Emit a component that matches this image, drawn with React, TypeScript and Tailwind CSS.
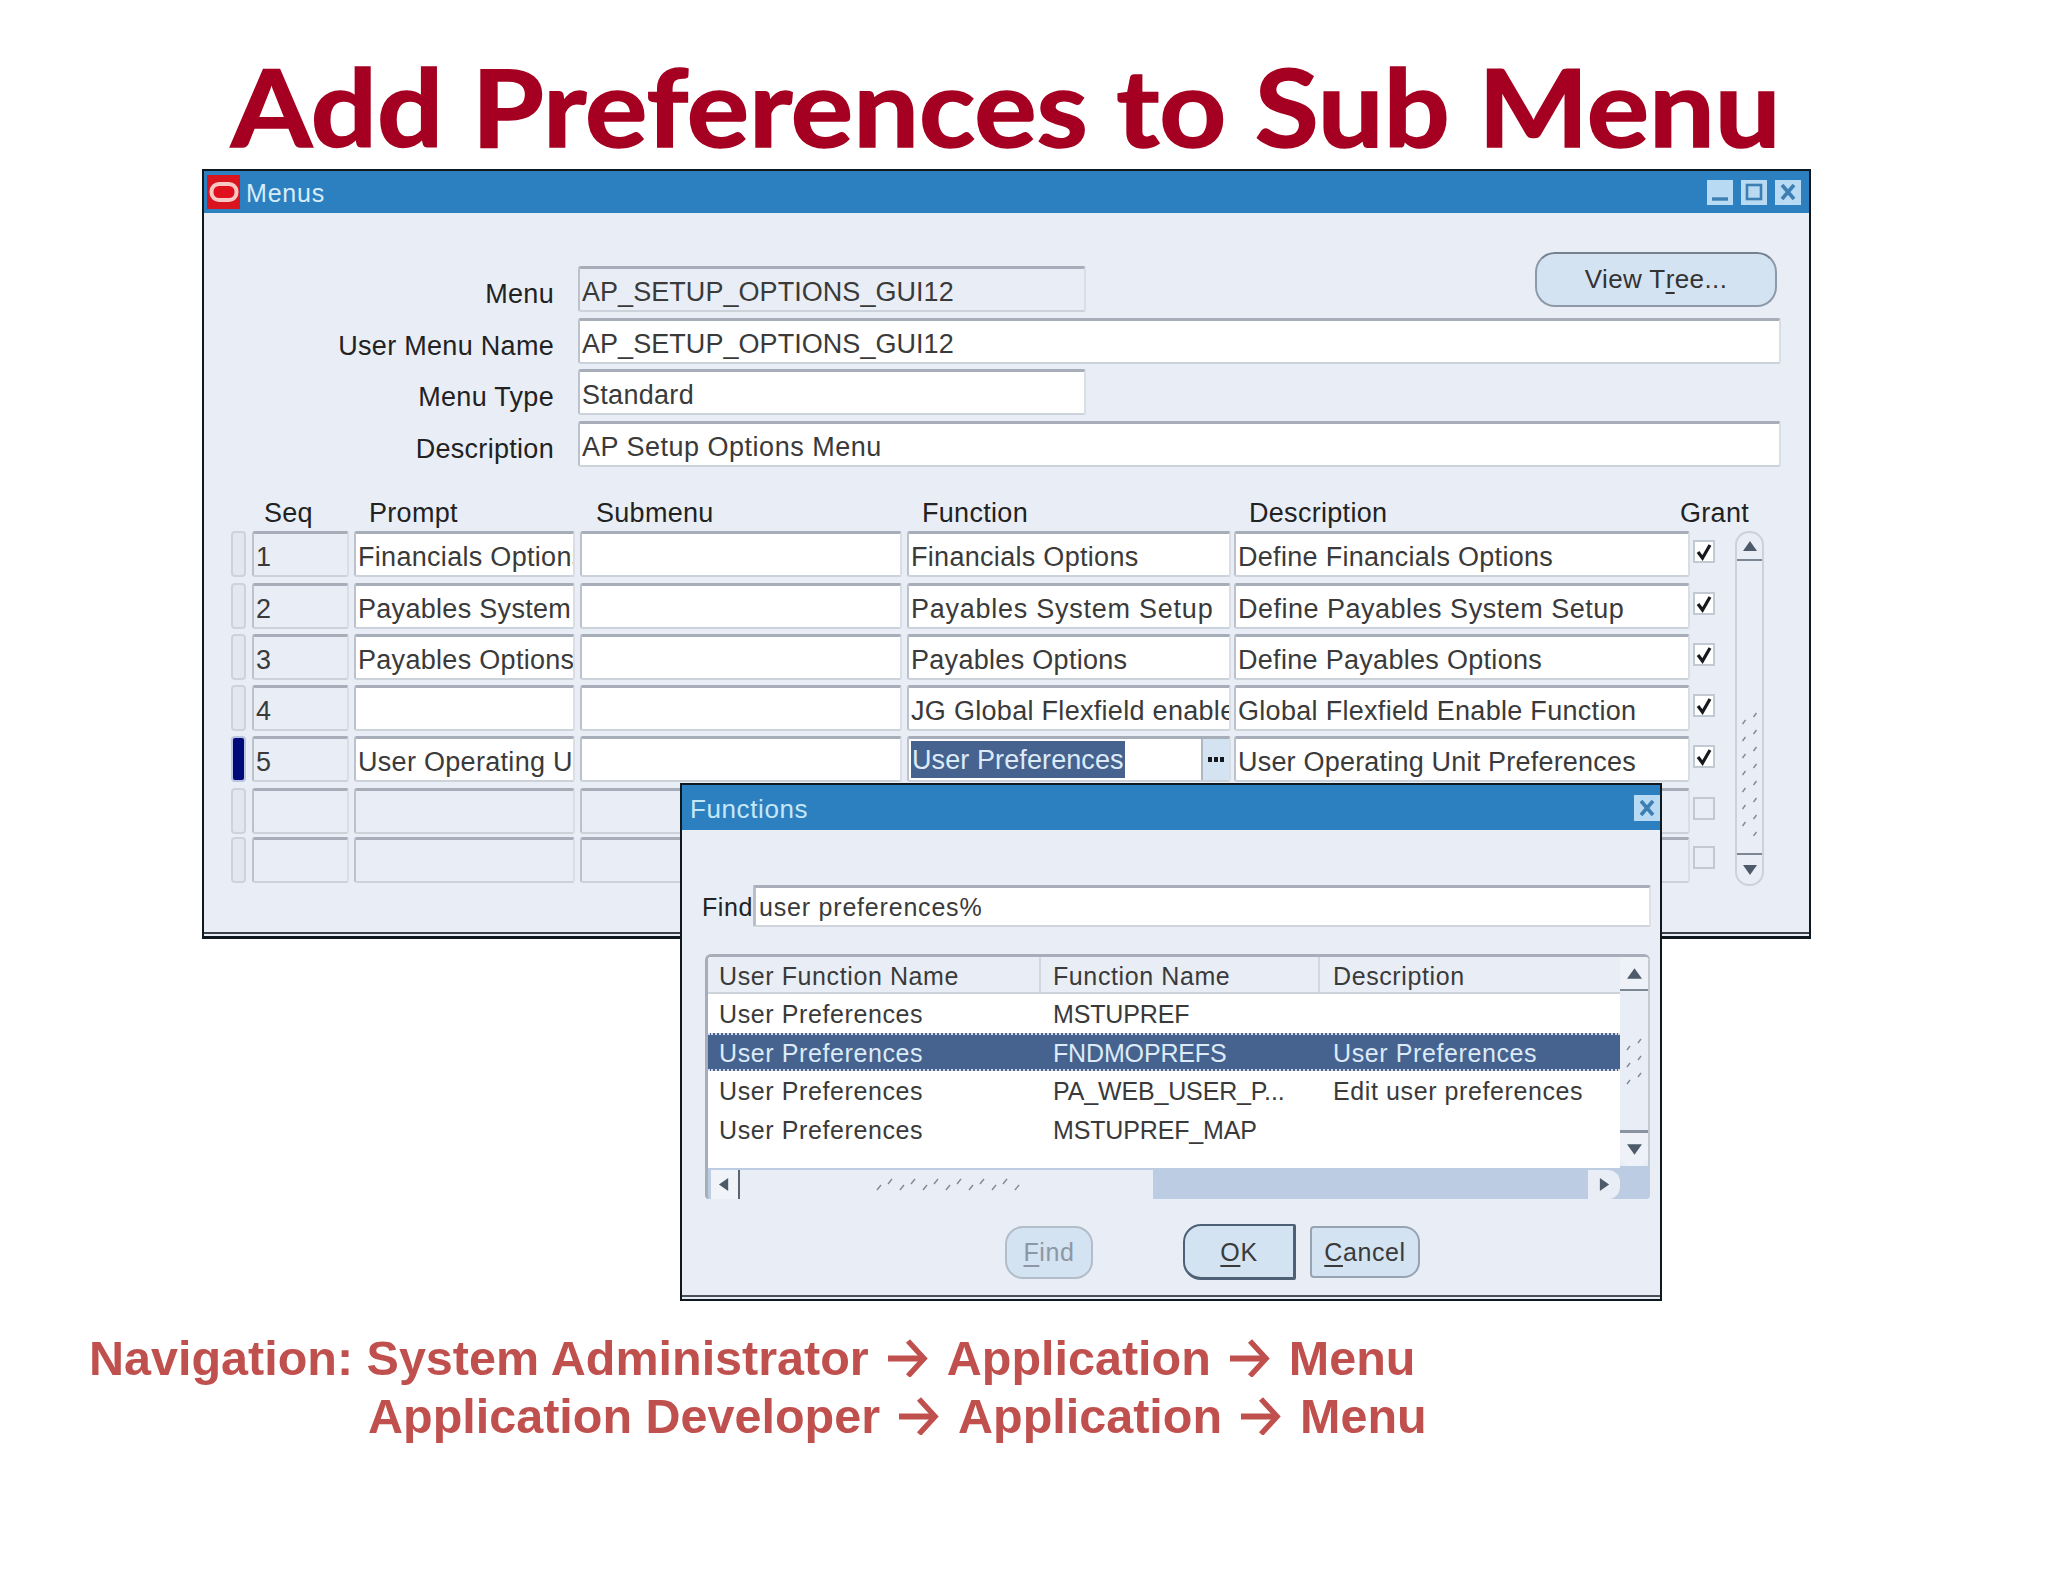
import React from "react";

type Row = {
  seq: string;
  prompt: string;
  fn: string;
  desc: string;
  checked: boolean;
  active: boolean;
  top: string;
};

const rows: Row[] = [
  { seq: "1", prompt: "Financials Options", fn: "Financials Options", desc: "Define Financials Options", checked: true, active: true, top: "mt-0" },
  { seq: "2", prompt: "Payables System Setup", fn: "Payables System Setup", desc: "Define Payables System Setup", checked: true, active: true, top: "mt-[6px]" },
  { seq: "3", prompt: "Payables Options", fn: "Payables Options", desc: "Define Payables Options", checked: true, active: true, top: "mt-[5px]" },
  { seq: "4", prompt: "", fn: "JG Global Flexfield enable", desc: "Global Flexfield Enable Function", checked: true, active: true, top: "mt-[5px]" },
  { seq: "5", prompt: "User Operating Unit", fn: "User Preferences", desc: "User Operating Unit Preferences", checked: true, active: true, top: "mt-[5px]" },
  { seq: "", prompt: "", fn: "", desc: "", checked: false, active: false, top: "mt-[6px]" },
  { seq: "", prompt: "", fn: "", desc: "", checked: false, active: false, top: "mt-[3px]" },
];

const results = [
  { a: "User Preferences", b: "MSTUPREF", c: "", sel: false },
  { a: "User Preferences", b: "FNDMOPREFS", c: "User Preferences", sel: true },
  { a: "User Preferences", b: "PA_WEB_USER_P...", c: "Edit user preferences", sel: false },
  { a: "User Preferences", b: "MSTUPREF_MAP", c: "", sel: false },
];

const fieldCls =
  "h-[46px] shrink-0 flex items-center overflow-hidden whitespace-nowrap rounded-[3px] border-t-[3px] border-l-2 border-b-2 border-r-2 border-t-[#a7aeb9] border-l-[#bcc2cb] border-b-[#ccd2da] border-r-[#d9dee5] pl-[2px] pt-[5px] text-[27px] leading-[32px] tracking-[0.3px] text-[#3a3a3a]";

const labelCls = "w-[350px] pt-[10px] text-right text-[27px] leading-[32px] tracking-[0.3px] text-[#222]";

function Field({ w, value, bg = "bg-white", extra = "" }: { w: string; value: string; bg?: string; extra?: string }) {
  return <div className={`${fieldCls} ${w} ${bg} ${extra}`}>{value}</div>;
}

function Dots({ w, h, vertical }: { w: number; h: number; vertical: boolean }) {
  const ticks: React.ReactNode[] = [];
  if (vertical) {
    for (let y = 0; y < h; y += 17) {
      ticks.push(<path key={`a${y}`} d={`M${w / 2 - 7} ${y + 13}l3 -4`} />);
      ticks.push(<path key={`b${y}`} d={`M${w / 2 + 4} ${y + 6}l3 -4`} />);
    }
  } else {
    for (let x = 0; x < w; x += 23) {
      ticks.push(<path key={`a${x}`} d={`M${x + 2} ${h - 3}l4 -5`} />);
      ticks.push(<path key={`b${x}`} d={`M${x + 13} ${h - 9}l4 -5`} />);
    }
  }
  return (
    <svg width={w} height={h} viewBox={`0 0 ${w} ${h}`} fill="none" stroke="#7f8a99" strokeWidth="1.4">
      {ticks}
    </svg>
  );
}

function Tri({ dir, size = 14 }: { dir: "up" | "down" | "left" | "right"; size?: number }) {
  const pts = {
    up: "7,2 14,12 0,12",
    down: "0,2 14,2 7,12",
    left: "11,0 11,14 1,7",
    right: "2,0 2,14 12,7",
  }[dir];
  return (
    <svg width={size} height={size} viewBox="0 0 14 14">
      <polygon points={pts} fill="#4d5a6a" />
    </svg>
  );
}

function Check({ checked, active }: { checked: boolean; active: boolean }) {
  return (
    <div
      className={`ml-[3px] mt-[9px] h-[23px] w-[22px] shrink-0 border-2 border-[#c3c9d2] ${active ? "bg-white" : "bg-transparent"} flex items-center justify-center`}
    >
      {checked && (
        <svg width="16" height="18" viewBox="0 0 16 18">
          <path d="M2 9l4.5 6L14 2" fill="none" stroke="#15181c" strokeWidth="3.2" />
        </svg>
      )}
    </div>
  );
}

function WinBtn({ kind }: { kind: "min" | "max" | "close" }) {
  return (
    <div className="flex h-[25px] w-[26px] items-center justify-center bg-[#b8daf2]">
      <svg width="20" height="20" viewBox="0 0 20 20" fill="none" stroke="#3d7fb3">
        {kind === "min" && <path d="M2 17h16" strokeWidth="3.4" />}
        {kind === "max" && <rect x="3" y="3" width="14" height="14" strokeWidth="2.6" />}
        {kind === "close" && <path d="M4 3l12 14M16 3L4 17" strokeWidth="3.6" />}
      </svg>
    </div>
  );
}

function Arrow() {
  return (
    <svg width="42" height="38" viewBox="0 0 42 38" className="shrink-0" fill="none" stroke="#c0504d">
      <path d="M1 19.5h34" strokeWidth="6" />
      <path d="M21 2l16 17.5L21 37" strokeWidth="5.5" />
    </svg>
  );
}

export default function App() {
  return (
    <div className="relative h-[1576px] w-[2048px] overflow-hidden bg-white [font-family:'Liberation_Sans',Arial,sans-serif]">
      {/* Slide title */}
      <h1 className="ml-[231px] h-[169px] origin-left scale-x-[1.081] whitespace-nowrap pt-[40px] text-[108px] leading-[130px] font-bold text-[#a50021] [-webkit-text-stroke:1.5px_#a50021] [font-family:Lato,sans-serif]">
        Add Preferences to Sub Menu
      </h1>

      {/* Menus window */}
      <div className="ml-[202px] flex h-[770px] w-[1609px] flex-col border-2 border-b-[3px] border-[#10181f] bg-[#e9eef6]">
        <div className="flex h-[42px] shrink-0 items-center bg-[#2c80c0]">
          <div className="ml-[3px] flex h-[34px] w-[33px] items-center justify-center bg-[#d9141f]">
            <svg width="30" height="22" viewBox="0 0 30 22">
              <rect x="2.5" y="3" width="25" height="16" rx="7.5" fill="#e0101c" stroke="#f8c9c4" strokeWidth="4" />
            </svg>
          </div>
          <span className="ml-[6px] pt-[3px] text-[25px] tracking-[0.8px] text-[#d8ecf8]">Menus</span>
          <div className="ml-auto mr-[8px] flex gap-[8px]">
            <WinBtn kind="min" />
            <WinBtn kind="max" />
            <WinBtn kind="close" />
          </div>
        </div>

        <div className="flex flex-1 flex-col pl-[27px]">
          {/* Header form */}
          <div className="ml-[-27px] mt-[53px] flex flex-col gap-[5.5px]">
            <div className="flex items-center">
              <label className={labelCls}>Menu</label>
              <div className="ml-[24px]">
                <Field w="w-[508px]" value="AP_SETUP_OPTIONS_GUI12" bg="bg-[#e9eef6]" extra="!tracking-[0.05px]" />
              </div>
              <button className="ml-[449px] mt-[-19px] flex h-[55px] w-[242px] items-center justify-center rounded-[20px] border-2 border-[#8e9aa8] border-t-[#75808e] bg-[#d3e3f2] text-[26px] tracking-[0.4px] text-[#333]">
                View T<u className="underline-offset-4">r</u>ee...
              </button>
            </div>
            <div className="flex items-center">
              <label className={labelCls}>User Menu Name</label>
              <div className="ml-[24px]">
                <Field w="w-[1203px]" value="AP_SETUP_OPTIONS_GUI12" extra="!tracking-[0.05px]" />
              </div>
            </div>
            <div className="flex items-center">
              <label className={labelCls}>Menu Type</label>
              <div className="ml-[24px]">
                <Field w="w-[508px]" value="Standard" />
              </div>
            </div>
            <div className="flex items-center">
              <label className={labelCls}>Description</label>
              <div className="ml-[24px]">
                <Field w="w-[1203px]" value="AP Setup Options Menu" extra="!tracking-[0.5px]" />
              </div>
            </div>
          </div>

          {/* Table header */}
          <div className="flex h-[64.5px] shrink-0 items-end pb-[2px] text-[27px] leading-[32px] tracking-[0.3px] text-[#222]">
            <span className="ml-[33px] w-[105px]">Seq</span>
            <span className="w-[227px]">Prompt</span>
            <span className="w-[326px]">Submenu</span>
            <span className="w-[327px]">Function</span>
            <span className="w-[431px]">Description</span>
            <span>Grant</span>
          </div>

          {/* Table rows and scrollbar */}
          <div className="flex items-start">
            <div className="flex flex-col">
              {rows.map((r, i) => (
                <div key={i} className={`flex ${r.top}`}>
                  <div
                    className={`h-[46px] w-[15px] shrink-0 rounded-[4px] border-2 ${
                      r.seq === "5" ? "border-[#b8c4e0] bg-[#000a78]" : "border-[#cdd3db] bg-[#e3e8f0]"
                    }`}
                  />
                  <div className="ml-[6px]">
                    <Field w="w-[97px]" value={r.seq} bg="bg-[#e9eef6]" />
                  </div>
                  <div className="ml-[5px]">
                    <Field w="w-[221px]" value={r.prompt} bg={r.active ? "bg-white" : "bg-[#e9eef6]"} />
                  </div>
                  <div className="ml-[5px]">
                    <Field w="w-[322px]" value="" bg={r.active ? "bg-white" : "bg-[#e9eef6]"} />
                  </div>
                  <div className="ml-[5px]">
                    {r.seq === "5" ? (
                      <div className={`${fieldCls} w-[324px] bg-white !pt-0 !pr-0`}>
                        <span className="bg-[#46628f] pl-[1px] pr-[1px] pt-[2px] leading-[35px] tracking-[0.1px] text-[#dcebf7]">{r.fn}</span>
                        <div className="ml-auto flex h-full w-[28px] items-center justify-center border-l-2 border-[#b0b7c1] bg-[#d3e3f2]">
                          <svg width="16" height="6" viewBox="0 0 16 6">
                            <path d="M0 0h4v5H0zM6 0h4v5H6zM12 0h4v5h-4z" fill="#15181c" />
                          </svg>
                        </div>
                      </div>
                    ) : (
                      <Field
                        w="w-[324px]"
                        value={r.fn}
                        bg={r.active ? "bg-white" : "bg-[#e9eef6]"}
                        extra={r.seq === "2" ? "!tracking-[0.75px]" : ""}
                      />
                    )}
                  </div>
                  <div className="ml-[3px]">
                    <Field
                      w="w-[456px]"
                      value={r.desc}
                      bg={r.active ? "bg-white" : "bg-[#e9eef6]"}
                      extra={r.seq === "2" ? "!tracking-[0.5px]" : r.seq === "5" ? "!tracking-[0.2px]" : ""}
                    />
                  </div>
                  <Check checked={r.checked} active={r.active} />
                </div>
              ))}
            </div>

            <div className="ml-[20px] flex h-[355px] w-[29px] flex-col items-center rounded-[14px] border-2 border-[#ccd2da] bg-[#e9eef6]">
              <div className="flex h-[28px] w-full items-center justify-center border-b-2 border-[#7d8794]">
                <Tri dir="up" />
              </div>
              <div className="mt-[150px] flex-1">
                <Dots w={25} h={125} vertical />
              </div>
              <div className="flex h-[31px] w-full items-center justify-center border-t-2 border-[#7d8794]">
                <Tri dir="down" />
              </div>
            </div>
          </div>
        </div>
        <div className="mb-[2px] h-[2px] shrink-0 bg-[#3b4148]" />
      </div>

      {/* Functions dialog, floating over the Menus window */}
      <div className="absolute left-[680px] top-[783px] flex h-[518px] w-[982px] flex-col border-2 border-[#10181f] bg-[#e9eef6]">
        <div className="flex h-[45px] shrink-0 items-center bg-[#2c80c0]">
          <span className="ml-[8px] pt-[3px] text-[26px] tracking-[0.6px] text-[#c4e8f8]">Functions</span>
          <div className="ml-auto flex h-[26px] w-[26px] items-center justify-center bg-[#b8daf2]">
            <svg width="20" height="20" viewBox="0 0 20 20" fill="none" stroke="#3d7fb3">
              <path d="M4 3l12 14M16 3L4 17" strokeWidth="3.6" />
            </svg>
          </div>
        </div>

        <div className="flex flex-1 flex-col pl-[20px] text-[25px] tracking-[0.6px] text-[#3a3a3a]">
          <div className="mt-[55px] flex h-[42px] items-center">
            <span className="w-[50px] pt-[3px] text-[#222]">Find</span>
            <div className="ml-[1px] flex h-[42px] w-[898px] items-center rounded-[2px] border-t-[3px] border-l-[3px] border-b-2 border-r-2 border-t-[#a7aeb9] border-l-[#b9bfc8] border-b-[#d0d5dc] border-r-[#dde1e7] bg-white pl-[3px] pt-[3px] tracking-[0.8px]">
              user preferences%
            </div>
          </div>

          {/* Results list */}
          <div className="mt-[27px] ml-[3px] flex h-[245px] w-[945px] flex-col overflow-hidden rounded-t-[6px] rounded-b-[4px] border-t-[3px] border-l-[3px] border-t-[#a7aeb9] border-l-[#a7aeb9] bg-[#bccde3]">
            <div className="flex">
              <div className="flex h-[211px] w-[912px] flex-col bg-white">
                <div className="flex h-[37px] items-center border-b-2 border-[#cdd3db] bg-[#e9eef6]">
                  <span className="h-full w-[331px] pl-[11px] leading-[38px]">User Function Name</span>
                  <span className="h-full w-[279px] border-l-2 border-[#d3d8e0] pl-[12px] leading-[38px]">Function Name</span>
                  <span className="h-full flex-1 border-l-2 border-[#d3d8e0] pl-[13px] leading-[38px]">Description</span>
                </div>
                {results.map((r, i) => (
                  <div
                    key={i}
                    className={`flex h-[38.5px] items-center pt-[3px] ${
                      r.sel ? "border-y-2 border-dotted border-[#d4dce8] bg-[#46628f] text-[#dcebf7]" : ""
                    }`}
                  >
                    <span className="w-[331px] pl-[11px]">{r.a}</span>
                    <span className="w-[279px] pl-[14px] tracking-[-0.15px]">{r.b}</span>
                    <span className="pl-[15px]">{r.c}</span>
                  </div>
                ))}
              </div>
              <div className="flex h-[209px] w-[30px] flex-col items-center border-r-2 border-[#c4cad3] bg-[#e9eef6]">
                <div className="flex h-[34px] w-full items-center justify-center border-b-2 border-[#7d8794] bg-[#eef2f8]">
                  <Tri dir="up" size={15} />
                </div>
                <div className="mt-[46px] flex-1">
                  <Dots w={24} h={50} vertical />
                </div>
                <div className="flex h-[36px] w-full items-center justify-center rounded-b-[12px] border-t-[3px] border-[#8a94a1] bg-[#eef2f8]">
                  <Tri dir="down" size={15} />
                </div>
              </div>
            </div>

            <div className="mt-auto flex h-[29px] shrink-0 items-center">
              <div className="ml-[3px] flex h-full w-[442px] items-center bg-[#e9eef6]">
                <div className="flex h-full w-[29px] items-center justify-center border-r-2 border-[#5c6672] bg-[#f0f3f8]">
                  <Tri dir="left" size={13} />
                </div>
                <div className="ml-[135px]">
                  <Dots w={150} h={16} vertical={false} />
                </div>
              </div>
              <div className="ml-[435px] flex h-full w-[32px] items-center justify-center rounded-r-[12px] bg-[#e9eef6]">
                <Tri dir="right" size={13} />
              </div>
            </div>
          </div>

          {/* Dialog buttons */}
          <div className="mt-[25px] flex items-center">
            <button className="ml-[303px] flex h-[53px] w-[88px] items-center justify-center rounded-[18px] border-2 border-[#b3bdc9] bg-[#d3e3f2] pt-[2px] text-[#8d97a3]">
              <u className="underline-offset-4">F</u>ind
            </button>
            <button className="ml-[90px] flex h-[56px] w-[113px] items-center justify-center rounded-l-[18px] rounded-r-[2px] border-2 border-r-[3px] border-b-[3px] border-[#4d6076] bg-[#d3e3f2] pt-[2px]">
              <u className="underline-offset-4">O</u>K
            </button>
            <button className="ml-[14px] flex h-[52px] w-[110px] items-center justify-center rounded-r-[16px] rounded-l-[4px] border-2 border-[#97a3b1] bg-[#d3e3f2] pt-[2px]">
              <u className="underline-offset-4">C</u>ancel
            </button>
          </div>
        </div>
        <div className="mb-[2px] h-[2px] shrink-0 bg-[#4a5058]" />
      </div>

      {/* Navigation notes */}
      <div className="mt-[393px] flex flex-col gap-[6px] text-[48.5px] leading-[52px] font-bold text-[#c0504d]">
        <div className="ml-[89px] flex items-center gap-[18px] whitespace-nowrap">
          <span>Navigation: System Administrator</span>
          <Arrow />
          <span>Application</span>
          <Arrow />
          <span>Menu</span>
        </div>
        <div className="ml-[368px] flex items-center gap-[18px] whitespace-nowrap">
          <span>Application Developer</span>
          <Arrow />
          <span>Application</span>
          <Arrow />
          <span>Menu</span>
        </div>
      </div>
    </div>
  );
}
